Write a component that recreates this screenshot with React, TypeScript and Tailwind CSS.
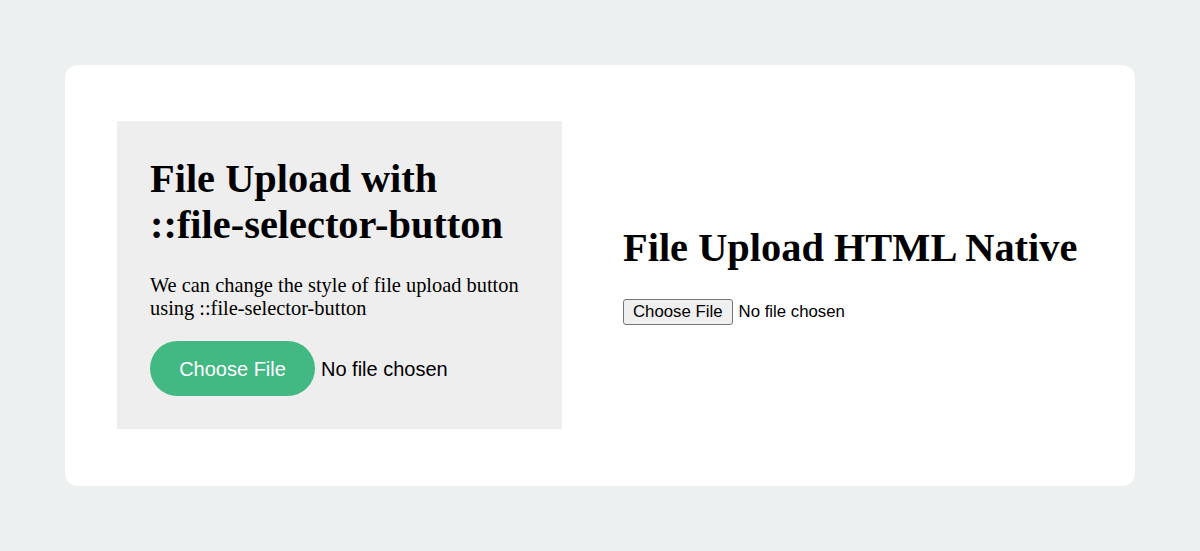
export default function App() {
  return (
    <div className="min-h-[551px] bg-[#ecf0f1] px-[65px] pt-[65px] pb-[65px]">
      <div className="flex rounded-[13px] bg-white px-[52px] pt-[56px] pb-[57px]">
        {/* styled with ::file-selector-button */}
        <div className="h-[308px] w-[445px] shrink-0 bg-[#eeeeee] px-[33px] pt-[35px]">
          <h1 className="font-['Liberation_Serif',serif] text-[40.4px] font-bold leading-[46px] text-black">
            File Upload with
            <br />
            ::file-selector-button
          </h1>
          <p className="mt-[26px] font-['Liberation_Serif',serif] text-[20.4px] leading-[23px] text-black">
            We can change the style of file upload button using ::file-selector-button
          </p>
          <div className="mt-[21px] flex items-center gap-[6px] font-['Liberation_Sans',Arial,sans-serif] text-[20px]">
            <span className="flex h-[55px] w-[165px] items-center justify-center rounded-full bg-[#42b883] text-white">
              Choose File
            </span>
            <span className="text-black">No file chosen</span>
          </div>
        </div>

        {/* native */}
        <div className="ml-[61px] flex-1 pt-[104px]">
          <h1 className="font-['Liberation_Serif',serif] text-[40.4px] font-bold leading-[46px] text-black">
            File Upload HTML Native
          </h1>
          <div className="mt-[28px] flex items-center gap-[6px] font-['Liberation_Sans',Arial,sans-serif] text-[16.8px]">
            <span className="flex h-[26px] items-center rounded-[3px] border border-[#767676] bg-[#efefef] px-[9px] text-black">
              Choose File
            </span>
            <span className="text-black">No file chosen</span>
          </div>
        </div>
      </div>
    </div>
  );
}
